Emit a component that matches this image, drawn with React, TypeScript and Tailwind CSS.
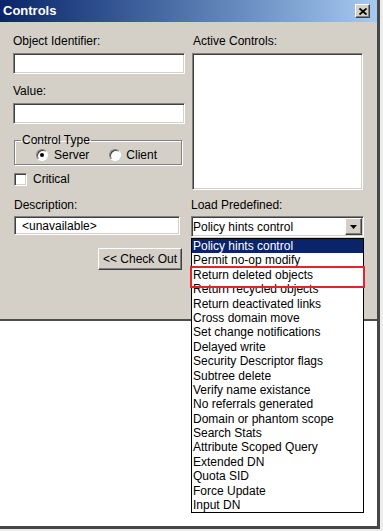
import React from 'react';

const PREDEFINED = [
  'Policy hints control',
  'Permit no-op modify',
  'Return deleted objects',
  'Return recycled objects',
  'Return deactivated links',
  'Cross domain move',
  'Set change notifications',
  'Delayed write',
  'Security Descriptor flags',
  'Subtree delete',
  'Verify name existance',
  'No referrals generated',
  'Domain or phantom scope',
  'Search Stats',
  'Attribute Scoped Query',
  'Extended DN',
  'Quota SID',
  'Force Update',
  'Input DN',
];

// classic sunken 3D edge used by text boxes and list boxes
const sunken =
  'border border-t-[#808080] border-l-[#808080] border-b-white border-r-white shadow-[inset_1px_1px_0_#404040,inset_-1px_-1px_0_#d4d0c8]';
const raised =
  'border border-t-white border-l-white border-b-[#404040] border-r-[#404040] shadow-[inset_-1px_-1px_0_#808080]';

function Radio({ checked }: { checked?: boolean }) {
  return (
    <span className="relative flex h-[12px] w-[12px] items-center justify-center rounded-full border border-t-[#808080] border-l-[#808080] border-b-white border-r-white bg-white shadow-[inset_1px_1px_0_#404040]">
      {checked && <span className="h-[4px] w-[4px] rounded-full bg-black" />}
    </span>
  );
}

export default function App() {
  return (
    <div className="h-[531px] w-[383px] bg-[#ececec] font-['Liberation_Sans',Arial,sans-serif] text-[12px] leading-[14px] text-black">
      <div className="relative h-[529px] w-[380px] border-b-[3px] border-r-[3px] border-[#474747] bg-white">
        {/* Dialog */}
        <div className="h-[321px] border-b-2 border-[#4d4d4d] bg-[#d4d0c8]">
          {/* Title bar */}
          <div className="flex h-[22px] items-center justify-between bg-gradient-to-r from-[#0a246a] to-[#a6caf0] pl-[3px] pr-[7px]">
            <span className="text-[13px] font-bold text-white">Controls</span>
            <span className={`flex h-[14px] w-[15px] items-center justify-center bg-[#d4d0c8] ${raised}`}>
              <svg width="8" height="7" viewBox="0 0 8 7">
                <path d="M0.5 0.5 L7.5 6.5 M7.5 0.5 L0.5 6.5" stroke="black" strokeWidth="1.8" />
              </svg>
            </span>
          </div>

          <div className="flex pl-[13px] pt-[12px]">
            {/* Left column */}
            <div className="flex w-[172px] flex-col">
              <span>Object Identifier:</span>
              <div className={`mt-[5px] h-[21px] bg-white ${sunken}`} />
              <span className="mt-[10px]">Value:</span>
              <div className={`mt-[5px] h-[21px] bg-white ${sunken}`} />

              <fieldset className="ml-[1px] mt-[10px] h-[31px] w-[168px] border border-[#808080] shadow-[1px_1px_0_white,inset_1px_1px_0_white]">
                <legend className="ml-[6px] px-[1px] leading-[12px]">Control Type</legend>
                <div className="mt-[2px] flex h-[14px] items-center pl-[21px]">
                  <Radio checked />
                  <span className="ml-[6px]">Server</span>
                  <span className="ml-[20px]">
                    <Radio />
                  </span>
                  <span className="ml-[5px]">Client</span>
                </div>
              </fieldset>

              <div className="ml-[1px] mt-[7px] flex items-center">
                <span className={`h-[13px] w-[13px] bg-white ${sunken}`} />
                <span className="ml-[6px]">Critical</span>
              </div>

              <span className="ml-[1px] mt-[12px]">Description:</span>
              <div className={`ml-[1px] mt-[4px] flex h-[19px] w-[166px] items-center bg-white pl-[7px] ${sunken}`}>
                &lt;unavailable&gt;
              </div>
              <button
                className={`ml-[85px] mt-[13px] h-[22px] w-[84px] bg-[#d4d0c8] text-[12px] ${raised}`}
              >
                &lt;&lt; Check Out
              </button>
            </div>

            {/* Right column */}
            <div className="ml-[6px] flex w-[173px] flex-col">
              <span className="pl-[2px]">Active Controls:</span>
              <div className={`ml-[1px] mt-[5px] h-[137px] w-[171px] bg-white ${sunken}`} />
              <span className="mt-[8px]">Load Predefined:</span>
              <div className="relative mt-[4px]">
                <div className={`flex h-[21px] items-center justify-between bg-white pl-[1px] pr-[1px] ${sunken}`}>
                  <span>Policy hints control</span>
                  <span className={`flex h-[17px] w-[17px] items-center justify-center bg-[#d4d0c8] ${raised}`}>
                    <svg width="7" height="4" viewBox="0 0 7 4">
                      <path d="M0 0 H7 L3.5 4 Z" fill="black" />
                    </svg>
                  </span>
                </div>

                {/* Open dropdown list */}
                <div className="absolute left-0 top-[22px] z-10 w-[173px] border border-black bg-white">
                  {PREDEFINED.map((item, i) => (
                    <div
                      key={item}
                      className={`h-[14.4px] whitespace-nowrap pl-[1px] leading-[14.4px] ${
                        i === 0 ? 'bg-[#0a246a] text-white' : ''
                      }`}
                    >
                      {item}
                    </div>
                  ))}
                  <div className="pointer-events-none absolute -left-[2px] top-[27px] h-[22px] w-[175px] border-2 border-[#e3242b]" />
                </div>
              </div>
            </div>
          </div>
        </div>
      </div>
    </div>
  );
}
